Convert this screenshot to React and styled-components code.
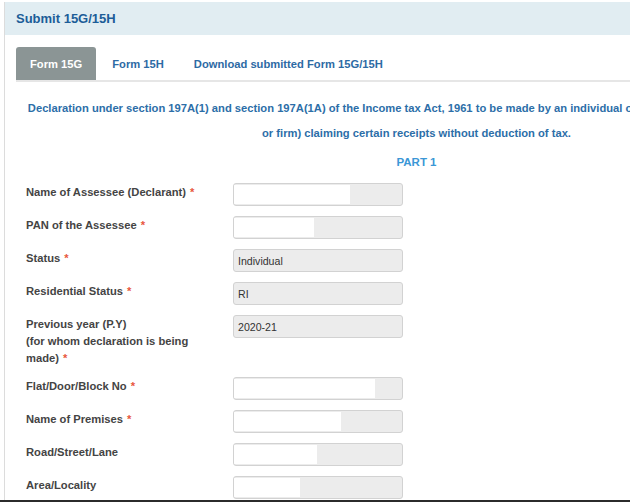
import styled, { createGlobalStyle } from "styled-components";

const GlobalStyle = createGlobalStyle`
  html, body {
    margin: 0;
    padding: 0;
    background: #fff;
    overflow: hidden;
  }
  body {
    font-family: "Liberation Sans", Arial, sans-serif;
    height: 502px;
    border-bottom: 2px solid #2b2b2b;
    box-sizing: border-box;
  }
`;

const fields = [
  { label: "Name of Assessee (Declarant)", required: true, mask: 116 },
  { label: "PAN of the Assessee", required: true, mask: 80 },
  { label: "Status", required: true, value: "Individual" },
  { label: "Residential Status", required: true, value: "RI" },
  {
    label: "Previous year (P.Y)\n(for whom declaration is being made)",
    required: true,
    value: "2020-21",
  },
  { label: "Flat/Door/Block No", required: true, mask: 141 },
  { label: "Name of Premises", required: true, mask: 107 },
  { label: "Road/Street/Lane", mask: 83 },
  { label: "Area/Locality", mask: 66 },
];

const App = () => {
  return (
    <>
      <GlobalStyle />
      <Page>
        <Panel>
          <Header>
            <Title>Submit 15G/15H</Title>
          </Header>
          <Tabs>
            <Tab active>Form 15G</Tab>
            <Tab>Form 15H</Tab>
            <Tab>Download submitted Form 15G/15H</Tab>
          </Tabs>
          <Declaration>
            Declaration under section 197A(1) and section 197A(1A) of the Income
            tax Act, 1961 to be made by an individual or a person (not being a
            company or firm) claiming certain receipts without deduction of tax.
          </Declaration>
          <Part>PART 1</Part>
          <Form>
            {fields.map((f) => (
              <Row key={f.label}>
                <Label>
                  {f.label.split("\n").map((line, i) => (
                    <span key={i}>
                      {i > 0 && <br />}
                      {line}
                    </span>
                  ))}
                  {f.required && <Star>*</Star>}
                </Label>
                <Input>
                  {f.value}
                  {f.mask && <Mask style={{ width: f.mask }} />}
                </Input>
              </Row>
            ))}
          </Form>
        </Panel>
      </Page>
    </>
  );
};

const Page = styled.div`
  padding: 2px 0 0 4px;
  width: 830px;
`;

const Panel = styled.section`
  border-left: 1px solid #dcdcdc;
  min-height: 520px;
`;

const Header = styled.div`
  background: #e1edf2;
  height: 33px;
  display: flex;
  align-items: center;
  padding-left: 11px;
`;

const Title = styled.h2`
  margin: 0;
  font-size: 13px;
  font-weight: bold;
  color: #1c5d98;
`;

const Tabs = styled.nav`
  display: flex;
  margin: 12px 0 0 11px;
  border-bottom: 2px solid #e6e6e6;
`;

const Tab = styled.a`
  height: 33px;
  display: flex;
  align-items: center;
  padding: 0 14px;
  margin-right: 2px;
  font-size: 11.2px;
  font-weight: bold;
  border-radius: 3px 3px 0 0;
  color: ${(p) => (p.active ? "#ffffff" : "#2d6aa4")};
  background: ${(p) => (p.active ? "#8b9595" : "transparent")};
  cursor: pointer;
`;

const Declaration = styled.p`
  margin: 14px 0 0;
  padding: 0 28px 0 22px;
  text-align: center;
  font-size: 11.2px;
  line-height: 25px;
  font-weight: bold;
  color: #2c6ea8;
`;

const Part = styled.h3`
  margin: 8px 0 0;
  padding: 0 28px 0 22px;
  text-align: center;
  font-size: 11.5px;
  line-height: 16px;
  font-weight: bold;
  color: #3b97d6;
`;

const Form = styled.div`
  margin-top: 13px;
  padding-left: 21px;
  display: flex;
  flex-direction: column;
  gap: 10px;
`;

const Row = styled.div`
  display: grid;
  grid-template-columns: 207px 170px;
  align-items: start;
`;

const Label = styled.label`
  font-size: 11.2px;
  line-height: 17px;
  font-weight: bold;
  color: #444;
  padding-top: 1px;
  padding-right: 16px;
`;

const Star = styled.span`
  color: #e8573d;
  margin-left: 4px;
`;

const Input = styled.div`
  position: relative;
  height: 23px;
  box-sizing: border-box;
  background: #ececec;
  border: 1px solid #d2d2d2;
  border-radius: 3px;
  padding-left: 4px;
  display: flex;
  align-items: center;
  font-size: 10.6px;
  color: #333;
  overflow: hidden;
`;

const Mask = styled.span`
  position: absolute;
  left: 0;
  top: 1px;
  bottom: 1px;
  background: #fff;
`;

export default App;
